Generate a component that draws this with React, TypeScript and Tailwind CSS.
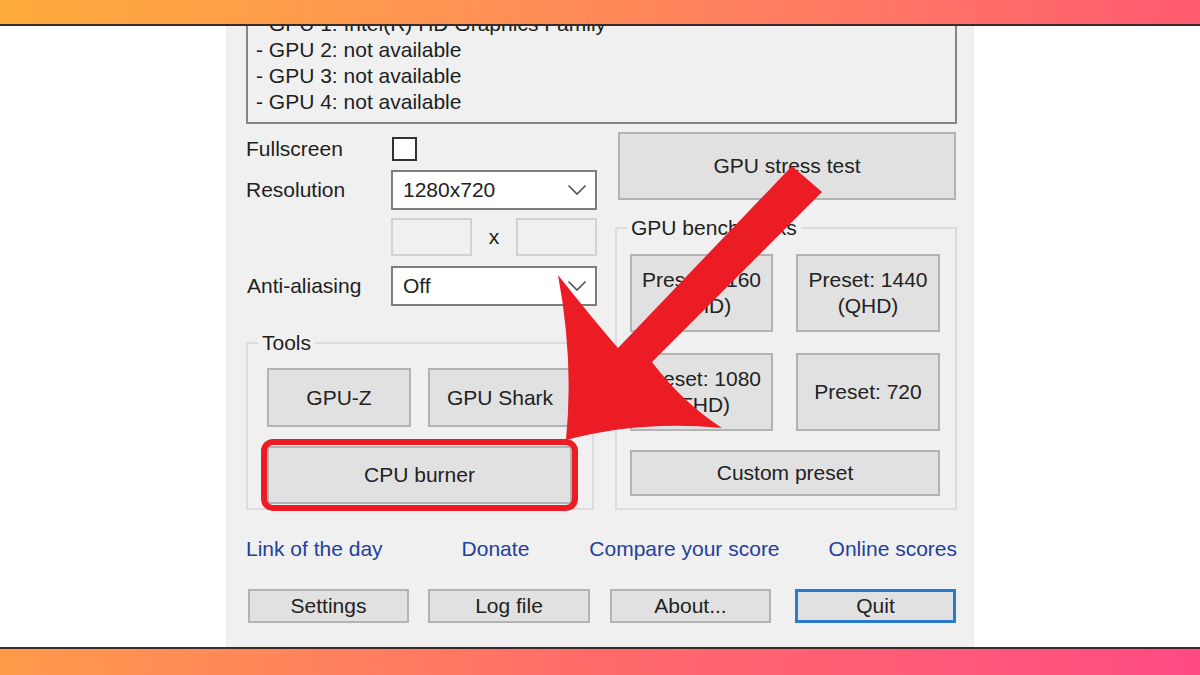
import { ReactNode } from 'react';

const FONT = { fontFamily: '"Liberation Sans", Arial, sans-serif' };

const Boton = ({
    children,
    className = '',
    borde = 'border-2 border-[#b3b3b3]',
}: {
    children: ReactNode;
    className?: string;
    borde?: string;
}) => (
    <div
        className={`flex items-center justify-center text-center bg-[#e1e1e1] text-[21px] leading-[26px] text-[#222] ${borde} ${className}`}
    >
        {children}
    </div>
);

const Chevron = () => (
    <svg width="20" height="12" viewBox="0 0 20 12" className="mr-[8px] shrink-0">
        <polyline points="1.5,1.5 10,10 18.5,1.5" fill="none" stroke="#555" strokeWidth="1.6" />
    </svg>
);

const Selector = ({ valor }: { valor: string }) => (
    <div className="flex items-center justify-between w-[206px] h-[40px] bg-white border-2 border-[#7d7d7d] pl-[10px] text-[21px] text-[#222]">
        <span>{valor}</span>
        <Chevron />
    </div>
);

export default function App() {
    return (
        <div className="relative w-[1200px] h-[675px] flex flex-col bg-white overflow-hidden" style={FONT}>
            {/* barra superior */}
            <div className="h-[26px] shrink-0 bg-gradient-to-r from-[#fdac3a] via-[#ff8a58] to-[#ff5a70] border-b-2 border-[#3b2a2a] relative z-10" />

            <div className="flex-1 flex justify-center overflow-hidden">
                <div className="w-[748px] bg-[#f0f0f0] pl-[20px] pr-[17px] flex flex-col">
                    {/* lista de GPUs */}
                    <div className="mt-[-19px] border-2 border-[#858585] pl-[8px] pt-[2px] pb-[7px] text-[21px] leading-[26px] text-[#1e1e1e]">
                        <div>- GPU 1: Intel(R) HD Graphics Family</div>
                        <div>- GPU 2: not available</div>
                        <div>- GPU 3: not available</div>
                        <div>- GPU 4: not available</div>
                    </div>

                    <div className="flex gap-[18px]">
                        {/* columna izquierda */}
                        <div className="w-[351px] flex flex-col text-[21px] text-[#1e1e1e]">
                            <div className="mt-[13px] h-[24px] flex items-center">
                                <span className="w-[146px]">Fullscreen</span>
                                <div className="w-[25px] h-[24px] bg-white border-2 border-[#333]" />
                            </div>
                            <div className="mt-[9px] h-[40px] flex items-center">
                                <span className="w-[145px]">Resolution</span>
                                <Selector valor="1280x720" />
                            </div>
                            <div className="mt-[8px] h-[38px] flex items-center pl-[145px]">
                                <div className="w-[81px] h-[38px] border-2 border-[#d2d2d2]" />
                                <span className="w-[44px] text-center">x</span>
                                <div className="w-[81px] h-[38px] border-2 border-[#d2d2d2]" />
                            </div>
                            <div className="mt-[10px] h-[40px] flex items-center">
                                <span className="w-[145px] pl-[1px]">Anti-aliasing</span>
                                <Selector valor="Off" />
                            </div>

                            <fieldset className="mt-[25px] w-[348px] border-2 border-[#dcdcdc]">
                                <legend className="ml-[10px] px-[4px] leading-[24px]">Tools</legend>
                                <div className="pl-[19px] pb-[4px]">
                                    <div className="mt-[13px] flex gap-[17px]">
                                        <Boton className="w-[144px] h-[59px]">GPU-Z</Boton>
                                        <Boton className="w-[144px] h-[59px]">GPU Shark</Boton>
                                    </div>
                                    <div className="relative mt-[19px] w-[305px]">
                                        <Boton className="w-[305px] h-[58px]">CPU burner</Boton>
                                        <div className="absolute left-[-6px] right-[-6px] top-[-7px] bottom-[-7px] border-[6px] border-[#ec1c24] rounded-[12px]" />
                                    </div>
                                </div>
                            </fieldset>
                        </div>

                        {/* columna derecha */}
                        <div className="w-[342px] flex flex-col text-[21px] text-[#1e1e1e]">
                            <Boton className="mt-[8px] ml-[3px] w-[338px] h-[68px]">GPU stress test</Boton>
                            <fieldset className="mt-[16px] border-2 border-[#dcdcdc]">
                                <legend className="ml-[10px] px-[4px] leading-[24px]">GPU benchmarks</legend>
                                <div className="pl-[13px] pb-[12px]">
                                    <div className="mt-[14px] grid grid-cols-[143px_144px] gap-x-[23px] gap-y-[21px]">
                                        <Boton className="h-[78px]">Preset: 2160<br />(UHD)</Boton>
                                        <Boton className="h-[78px]">Preset: 1440<br />(QHD)</Boton>
                                        <Boton className="h-[78px]">Preset: 1080<br />(FHD)</Boton>
                                        <Boton className="h-[78px]">Preset: 720</Boton>
                                    </div>
                                    <Boton className="mt-[19px] w-[310px] h-[46px]">Custom preset</Boton>
                                </div>
                            </fieldset>
                        </div>
                    </div>

                    {/* enlaces */}
                    <div className="mt-[26px] h-[26px] flex items-center text-[21px] text-[#22409c]">
                        <span>Link of the day</span>
                        <span className="ml-[79px]">Donate</span>
                        <span className="ml-[60px]">Compare your score</span>
                        <span className="ml-auto">Online scores</span>
                    </div>

                    {/* botones inferiores */}
                    <div className="mt-[27px] pl-[2px] flex">
                        <Boton className="w-[161px] h-[34px]">Settings</Boton>
                        <Boton className="ml-[19px] w-[162px] h-[34px]">Log file</Boton>
                        <Boton className="ml-[20px] w-[161px] h-[34px]">About...</Boton>
                        <Boton className="ml-[24px] w-[161px] h-[34px]" borde="border-[3px] border-[#2a7bd0]">Quit</Boton>
                    </div>
                </div>
            </div>

            {/* barra inferior */}
            <div className="h-[28px] shrink-0 bg-gradient-to-r from-[#fe9a48] via-[#ff6a6a] to-[#ff4a82] border-t-2 border-[#3b2a2a]" />

            {/* flecha roja */}
            <svg className="absolute inset-0 pointer-events-none" width="1200" height="675" viewBox="0 0 1200 675">
                <path
                    d="M 792 166 L 822 192 L 652 362 Q 682 402 722 428 Q 640 420 566 440 Q 574 360 558 275 Q 592 318 618 348 Z"
                    fill="#ec1c24"
                />
            </svg>
        </div>
    );
}
